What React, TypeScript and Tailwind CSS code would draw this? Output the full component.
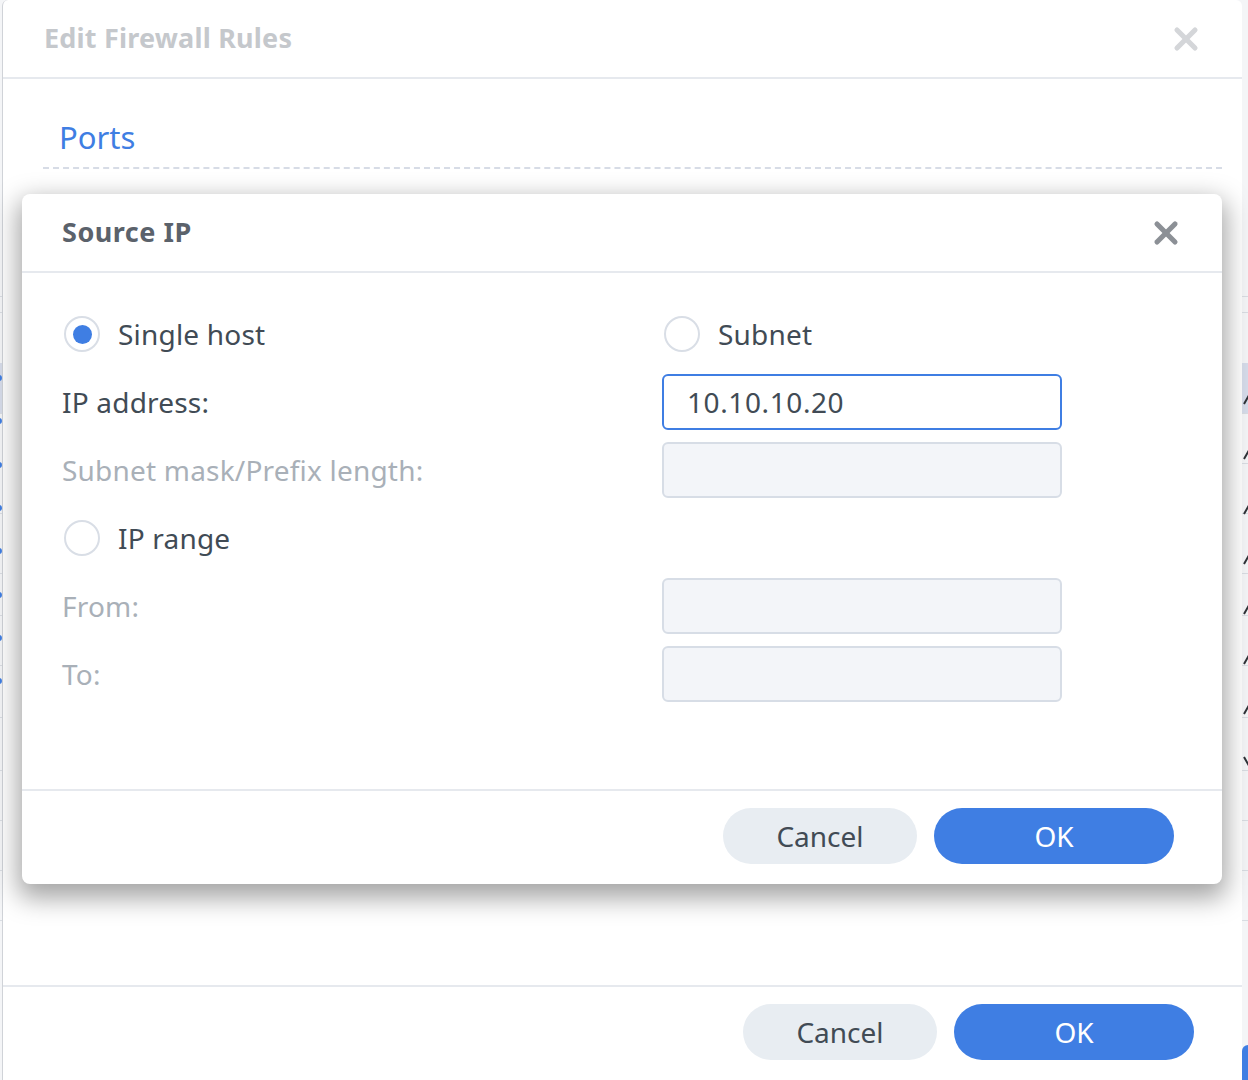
import React from 'react';
import { X } from 'lucide-react';

const font = { fontFamily: '"Noto Sans", "Liberation Sans", sans-serif' };

const Radio: React.FC<{ checked?: boolean; label: string }> = ({ checked, label }) => (
  <div className="flex items-center gap-[18px] pl-[2px]">
    <div className="w-[36px] h-[36px] rounded-full border-2 border-[#d9dee6] bg-white flex items-center justify-center">
      {checked && <div className="w-[19px] h-[19px] rounded-full bg-[#3f7ee3]" />}
    </div>
    <span className="text-[28px] text-[#414b55] tracking-[0.2px]">{label}</span>
  </div>
);

const Field: React.FC<{ value?: string; active?: boolean }> = ({ value, active }) =>
  active ? (
    <div className="w-[400px] h-[56px] rounded-[6px] border-2 border-[#3f7ee3] bg-white flex items-center px-[23px] text-[28px] text-[#414b55] tracking-[0.6px]">
      {value}
    </div>
  ) : (
    <div className="w-[400px] h-[56px] rounded-[6px] border-2 border-[#d7dde6] bg-[#f3f5f9]" />
  );

const Label: React.FC<{ text: string; muted?: boolean }> = ({ text, muted }) => (
  <span className={`text-[28px] tracking-[0.2px] ${muted ? 'text-[#a9b0b8]' : 'text-[#414b55]'}`}>{text}</span>
);

const Buttons: React.FC = () => (
  <div className="flex items-center gap-[17px] mb-[4px]">
    <button className="w-[194px] h-[56px] rounded-full bg-[#e8edf2] text-[28px] text-[#414b55]">Cancel</button>
    <button className="w-[240px] h-[56px] rounded-full bg-[#3f7ee3] text-[28px] text-white">OK</button>
  </div>
);

const Caret: React.FC<{ down?: boolean }> = ({ down }) => (
  <svg width="10" height="12" viewBox="0 0 10 12" className="block">
    <path d={down ? 'M1 3 L5 10 L9 3' : 'M1 10 L5 3 L9 10'} fill="none" stroke="#2f3338" strokeWidth="2" />
  </svg>
);

export default function App() {
  const bgRows = [296, 312, 363, 413, 463, 513, 573, 615, 665, 717, 770, 820, 870, 920];
  const carets = [400, 455, 510, 560, 610, 660, 710, 760];
  return (
    <div className="relative w-[1248px] h-[1080px] overflow-hidden bg-[#f4f5f7]" style={font}>
      {/* background page peeking out at the sides */}
      <div className="absolute inset-0">
        {bgRows.map((y, i) => (
          <div key={i} className="absolute left-0 right-0 h-px bg-[#d9dde3]" style={{ top: y }} />
        ))}
        <div className="absolute left-0 right-0 top-[363px] h-[50px] bg-[#d6dcea]" />
        {carets.map((y, i) => (
          <div key={i} className="absolute left-[1243px]" style={{ top: y - 6 }}>
            <Caret down={i === carets.length - 1} />
          </div>
        ))}
        {[375, 418, 462, 505, 548, 592, 635, 678].map((y, i) => (
          <div key={i} className="absolute left-[-4px] w-[6px] h-[6px] rounded-full bg-[#3f7ee3]" style={{ top: y }} />
        ))}
        <div className="absolute left-[1242px] top-[1045px] w-[30px] h-[40px] rounded-[6px] bg-[#3f7ee3]" />
      </div>

      {/* outer dialog */}
      <div className="absolute left-[2px] top-0 w-[1240px] h-[1100px] bg-white rounded-t-[6px] border-l border-[#d0d3d8] flex flex-col">
        <div className="h-[79px] border-b-2 border-[#e6e9ee] flex items-center justify-between pl-[41px] pr-[38px] shrink-0">
          <span className="text-[27px] font-bold text-[#c5c8cc] tracking-[0.2px]">Edit Firewall Rules</span>
          <X className="w-[36px] h-[36px] text-[#d4d6d9]" strokeWidth={3.4} />
        </div>
        <div className="h-[906px] pl-[40px] pr-[20px] pt-[35px] shrink-0">
          <div className="pl-[16px] pb-[6px] border-b-2 border-dashed border-[#d7dce6]">
            <span className="text-[31px] text-[#3f7ee3]">Ports</span>
          </div>
        </div>
        <div className="h-[95px] border-t-2 border-[#e6e9ee] flex items-center justify-end pr-[48px] shrink-0">
          <Buttons />
        </div>
      </div>

      {/* inner dialog */}
      <div className="absolute left-[22px] top-[194px] w-[1200px] h-[690px] bg-white rounded-[8px] shadow-[0_10px_26px_4px_rgba(0,0,0,0.36)] flex flex-col">
        <div className="h-[79px] border-b-2 border-[#e6e9ee] flex items-center justify-between pl-[40px] pr-[38px] shrink-0">
          <span className="text-[27px] font-bold text-[#5b626b] tracking-[0.5px]">Source IP</span>
          <X className="w-[36px] h-[36px] text-[#8c9096]" strokeWidth={3.4} />
        </div>
        <div className="flex-1 px-[40px] pt-[33px] grid grid-cols-[600px_1fr] auto-rows-[56px] gap-y-[12px] items-center">
          <Radio checked label="Single host" />
          <Radio label="Subnet" />
          <Label text="IP address:" />
          <Field active value="10.10.10.20" />
          <Label text="Subnet mask/Prefix length:" muted />
          <Field />
          <Radio label="IP range" />
          <div />
          <Label text="From:" muted />
          <Field />
          <Label text="To:" muted />
          <Field />
        </div>
        <div className="h-[95px] border-t-2 border-[#e6e9ee] flex items-center justify-end pr-[48px] shrink-0">
          <Buttons />
        </div>
      </div>
    </div>
  );
}
